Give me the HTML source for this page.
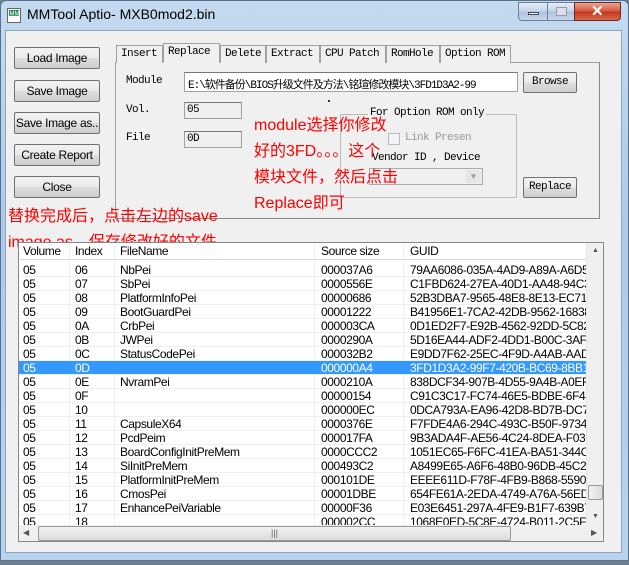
<!DOCTYPE html>
<html><head><meta charset="utf-8"><style>
*{margin:0;padding:0;box-sizing:border-box}
body{width:629px;height:565px;overflow:hidden;background:#6f7f8f;position:relative;font-family:"Liberation Sans",sans-serif}
.abs{position:absolute}
#frame{left:0;top:0;width:629px;height:561px;background:linear-gradient(#c4daf0,#aecbea 40%,#b9d3ee);border:1px solid #5a6f88;border-radius:6px 6px 0 0}
#client{left:5px;top:30px;width:617px;height:523px;background:#f0f0f0;border:1px solid #8ea5c0}
.title{left:27px;top:6px;font-size:14px;color:#000}
.btn{position:absolute;background:linear-gradient(#f2f2f2,#ebebeb 50%,#dddddd 51%,#cfcfcf);border:1px solid #707070;border-radius:2px;font-size:12px;text-align:center;color:#000;white-space:nowrap;letter-spacing:-0.3px}
.wb{position:absolute;top:2px;height:19px;border:1px solid #6d7f98;background:linear-gradient(#e6eef8,#c3d3e8 50%,#aec2dc 51%,#c7d8ec)}
.mono{font-family:"Liberation Mono","Noto Sans CJK SC",monospace;font-size:11px;letter-spacing:-0.6px;white-space:nowrap}
.tab{position:absolute;top:45px;height:18px;background:#f0f0f0;border:1px solid #a0a0a0;border-bottom:none;padding:2px 0 0 4px;overflow:hidden}
.tb{position:absolute;background:#fff;border:1px solid #a0a0a0;border-top-color:#777}
.red{position:absolute;color:#f00;font-family:"Liberation Sans","Noto Sans CJK SC",sans-serif;font-size:16px;white-space:nowrap}
.list{left:18px;top:242px;width:586px;height:300px;background:#fff;border:1px solid #828790;overflow:hidden}
.row{position:absolute;left:0;height:14px;width:567px;font-size:12px;line-height:14px;border-bottom:1px solid #f0f0f0;letter-spacing:-0.4px}
.row span{position:absolute;top:0;white-space:nowrap;overflow:hidden}
.sel{background:#3399ff;color:#fff}
.vl{position:absolute;top:0;width:1px;height:300px;background:#f0f0f0}
</style></head><body>
<div id="frame" class="abs"></div>
<svg class="abs" style="left:7px;top:8px" width="14" height="16"><rect x="0.5" y="0.5" width="13" height="14" fill="#fff" stroke="#666"/><rect x="2" y="2" width="10" height="6" fill="#2a8a5a"/><text x="2.5" y="7.5" font-size="6" fill="#fff" font-family="Liberation Sans">MM</text></svg>
<div class="abs title">MMTool Aptio- MXB0mod2.bin</div>
<div class="wb" style="left:518px;width:30px;border-radius:0 0 0 4px"><div class="abs" style="left:9px;top:9px;width:11px;height:3px;background:#fff;border:1px solid #445"></div></div>
<div class="wb" style="left:547px;width:28px;"><div class="abs" style="left:8px;top:4px;width:11px;height:9px;border:1px solid #99a;background:#dde"></div></div>
<div class="wb" style="left:574px;width:47px;border-radius:0 0 4px 0;background:linear-gradient(#e8a592,#d3563c 50%,#c0341c 51%,#d86a4a);border-color:#6a2a20"><div class="abs" style="left:16px;top:-1px;color:#fff;font-weight:bold;font-size:15px">✕</div></div>
<div id="client" class="abs"></div>

<div class="btn" style="left:14px;top:47px;width:86px;height:22px;line-height:20px">Load Image</div>
<div class="btn" style="left:14px;top:80px;width:86px;height:22px;line-height:20px">Save Image</div>
<div class="btn" style="left:14px;top:112px;width:86px;height:22px;line-height:20px">Save Image as..</div>
<div class="btn" style="left:14px;top:144px;width:86px;height:22px;line-height:20px">Create Report</div>
<div class="btn" style="left:14px;top:176px;width:86px;height:22px;line-height:20px">Close</div>

<div class="abs" style="left:115px;top:62px;width:485px;height:157px;border:1px solid #a0a0a0;background:#f0f0f0;border-right-color:#888;border-bottom-color:#888"></div>
<div class="tab mono" style="left:116px;width:47px">Insert</div>
<div class="tab mono" style="left:163px;top:43px;height:20px;width:57px;z-index:2;border-bottom:1px solid #f0f0f0">Replace</div>
<div class="tab mono" style="left:220px;width:46px">Delete</div>
<div class="tab mono" style="left:266px;width:54px">Extract</div>
<div class="tab mono" style="left:320px;width:66px">CPU Patch</div>
<div class="tab mono" style="left:386px;width:54px">RomHole</div>
<div class="tab mono" style="left:440px;width:71px">Option ROM</div>

<div class="abs mono" style="left:126px;top:75px">Module</div>
<div class="abs mono" style="left:126px;top:104px">Vol.</div>
<div class="abs mono" style="left:126px;top:132px">File</div>
<div class="tb mono" style="left:184px;top:72px;width:334px;height:20px;padding:3px 0 0 3px;overflow:hidden;letter-spacing:-1px">E:\软件备份\BIOS升级文件及方法\铭瑄修改模块\3FD1D3A2-99</div>
<div class="btn mono" style="left:523px;top:72px;width:54px;height:21px;line-height:19px">Browse</div>
<div class="tb mono" style="left:184px;top:102px;width:58px;height:17px;background:#f0f0f0;padding:1px 0 0 2px">05</div>
<div class="tb mono" style="left:184px;top:131px;width:58px;height:17px;background:#f0f0f0;padding:1px 0 0 2px">0D</div>
<div class="abs" style="left:328px;top:100px;width:2px;height:2px;background:#333"></div>

<div class="abs" style="left:340px;top:114px;width:177px;height:84px;border:1px solid #bbb"></div>
<div class="abs mono" style="left:368px;top:107px;background:#f0f0f0;padding:0 2px">For Option ROM only</div>
<div class="abs" style="left:388px;top:133px;width:12px;height:12px;border:1px solid #bbb;background:#f4f4f4"></div>
<div class="abs mono" style="left:405px;top:132px;color:#999">Link Presen</div>
<div class="abs mono" style="left:372px;top:152px">Vendor ID , Device</div>
<div class="abs" style="left:369px;top:168px;width:114px;height:17px;border:1px solid #aaa;background:#f0f0f0"><div class="abs" style="right:1px;top:1px;width:15px;height:13px;background:#e6e6e6;color:#999;font-size:8px;text-align:center;line-height:13px">▼</div></div>
<div class="btn mono" style="left:523px;top:177px;width:54px;height:21px;line-height:19px">Replace</div>

<div class="red" style="left:254px;top:111px">module选择你修改</div>
<div class="red" style="left:254px;top:137px">好的3FD。。。这个</div>
<div class="red" style="left:254px;top:163px">模块文件，然后点击</div>
<div class="red" style="left:254px;top:189px">Replace即可</div>
<div class="red" style="left:8px;top:202px">替换完成后，点击左边的save</div>
<div class="red" style="left:8px;top:228px">image as，保存修改好的文件</div>

<div class="abs list">
<div class="abs" style="left:0;top:0;width:567px;height:17px;background:#fff;border-bottom:1px solid #d5d5d5;font-size:12px;line-height:16px;letter-spacing:-0.4px">
<span class="abs" style="left:4px">Volume</span><span class="abs" style="left:56px">Index</span><span class="abs" style="left:101px">FileName</span><span class="abs" style="left:302px">Source size</span><span class="abs" style="left:391px">GUID</span>
<div class="abs" style="left:50px;top:0;width:1px;height:16px;background:#ddd"></div><div class="abs" style="left:95px;top:0;width:1px;height:16px;background:#ddd"></div><div class="abs" style="left:295px;top:0;width:1px;height:16px;background:#ddd"></div><div class="abs" style="left:384px;top:0;width:1px;height:16px;background:#ddd"></div>
</div>
<div class="vl" style="left:50px"></div><div class="vl" style="left:95px"></div><div class="vl" style="left:295px"></div><div class="vl" style="left:384px"></div>
<div id="rows"></div>
<div class="abs" style="left:567px;top:0;width:17px;height:282px;background:#f0f0f0;border-left:1px solid #e6e6e6"><div class="abs" style="left:5px;top:4px;font-size:7px;color:#555">▲</div><div class="abs" style="left:1px;top:242px;width:15px;height:15px;border:1px solid #999;border-radius:2px;background:linear-gradient(90deg,#f2f2f2,#dcdcdc)"></div><div class="abs" style="left:5px;top:270px;font-size:7px;color:#555">▼</div></div>
<div class="abs" style="left:0;top:282px;width:584px;height:17px;background:#f0f0f0"><div class="abs" style="left:4px;top:3px;font-size:8px;color:#555">◀</div><div class="abs" style="left:19px;top:1px;width:473px;height:15px;border:1px solid #999;border-radius:2px;background:linear-gradient(#f2f2f2,#dcdcdc);text-align:center;font-size:9px;line-height:13px;color:#666">|||</div><div class="abs" style="left:572px;top:3px;font-size:8px;color:#555">▶</div></div>
</div>
<script>
var d=[["06","NbPei","000037A6","79AA6086-035A-4AD9-A89A-A6D5A"],["07","SbPei","0000556E","C1FBD624-27EA-40D1-AA48-94C3D"],["08","PlatformInfoPei","00000686","52B3DBA7-9565-48E8-8E13-EC719E"],["09","BootGuardPei","00001222","B41956E1-7CA2-42DB-9562-168389"],["0A","CrbPei","000003CA","0D1ED2F7-E92B-4562-92DD-5C82E"],["0B","JWPei","0000290A","5D16EA44-ADF2-4DD1-B00C-3AF53"],["0C","StatusCodePei","000032B2","E9DD7F62-25EC-4F9D-A4AB-AAD20"],["0D","","000000A4","3FD1D3A2-99F7-420B-BC69-8BB1D"],["0E","NvramPei","0000210A","838DCF34-907B-4D55-9A4B-A0EF71"],["0F","","00000154","C91C3C17-FC74-46E5-BDBE-6F486A"],["10","","000000EC","0DCA793A-EA96-42D8-BD7B-DC7F6"],["11","CapsuleX64","0000376E","F7FDE4A6-294C-493C-B50F-973455"],["12","PcdPeim","000017FA","9B3ADA4F-AE56-4C24-8DEA-F03B7"],["13","BoardConfigInitPreMem","0000CCC2","1051EC65-F6FC-41EA-BA51-344C37"],["14","SiInitPreMem","000493C2","A8499E65-A6F6-48B0-96DB-45C266"],["15","PlatformInitPreMem","000101DE","EEEE611D-F78F-4FB9-B868-55907F"],["16","CmosPei","00001DBE","654FE61A-2EDA-4749-A76A-56ED7A"],["17","EnhancePeiVariable","00000F36","E03E6451-297A-4FE9-B1F7-639B70"],["18","","000002CC","1068E0ED-5C8E-4724-B011-2C5F95"]];
var h="";d.forEach(function(r,i){h+='<div class="row'+(r[0]=="0D"?' sel':'')+'" style="top:'+(20+i*14)+'px"><span style="left:4px">05</span><span style="left:56px">'+r[0]+'</span><span style="left:101px">'+r[1]+'</span><span style="left:302px">'+r[2]+'</span><span style="left:391px;width:176px">'+r[3]+'</span></div>'});
document.getElementById("rows").innerHTML=h;
</script>
</body></html>
